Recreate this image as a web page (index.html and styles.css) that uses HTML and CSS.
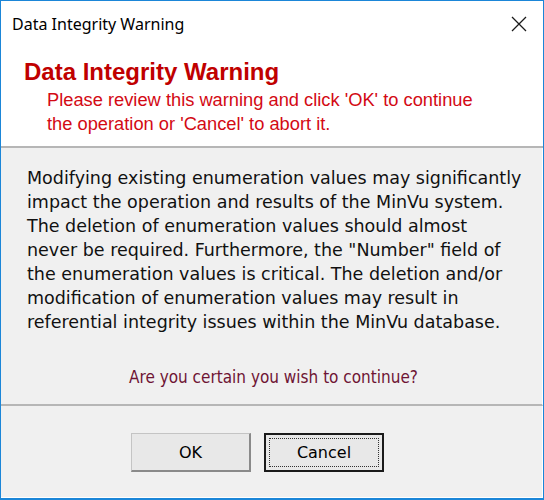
FILE: index.html
```html
<!DOCTYPE html>
<html lang="en">
<head>
  <meta charset="UTF-8">
  <title>Data Integrity Warning</title>
  <link rel="stylesheet" href="styles.css">
</head>
<body>

  <div class="window">
    <div class="titlebar">
      <span class="title">Data Integrity Warning</span>
      <svg class="close" width="16" height="16" viewBox="0 0 16 16">
        <path d="M1 1 L15 15 M15 1 L1 15" stroke="#1a1a1a" stroke-width="1.3" fill="none"/>
      </svg>
    </div>

    <div class="header">
      <div class="header-title">Data Integrity Warning</div>
      <div class="header-sub">Please review this warning and click 'OK' to continue<br>the operation or 'Cancel' to abort it.</div>
    </div>

    <div class="content">
      <p class="message">Modifying existing enumeration values may significantly<br>
        impact the operation and results of the MinVu system.<br>
        The deletion of enumeration values should almost<br>
        never be required. Furthermore, the "Number" field of<br>
        the enumeration values is critical. The deletion and/or<br>
        modification of enumeration values may result in<br>
        referential integrity issues within the MinVu database.</p>
      <p class="question">Are you certain you wish to continue?</p>
    </div>

    <div class="button-row">
      <button class="btn">OK</button>
      <button class="btn btn-default"><span class="focus">Cancel</span></button>
    </div>
  </div>

</body>
</html>
```

FILE: styles.css
```css
body {
  margin: 0;
  background-color: #ffffff;
}

.window {
  width: 544px;
  height: 500px;
  box-sizing: border-box;
  border: 1px solid #1b86d8;
  border-bottom-width: 2px;
  background-color: #f0f0f0;
  display: flex;
  flex-direction: column;
  overflow: hidden;
}

.titlebar {
  height: 44px;
  background-color: #ffffff;
  display: flex;
  align-items: center;
  justify-content: space-between;
  padding: 0 16px 0 11px;
}

.title {
  font-family: "Noto Sans", sans-serif;
  font-size: 16px;
  color: #000000;
  margin-top: 2px;
}

.close {
  margin-top: 2px;
}

.header {
  background-color: #ffffff;
  height: 103px;
  padding-top: 14px;
  box-sizing: border-box;
  border-bottom: 2px solid #b6b6b6;
  font-family: "Liberation Sans", Arial, sans-serif;
}

.header-title {
  font-size: 24px;
  font-weight: bold;
  color: #c00000;
  line-height: 26px;
  padding-left: 23px;
}

.header-sub {
  font-size: 18.3px;
  color: #d30a14;
  line-height: 24px;
  padding-left: 46px;
  margin-top: 3px;
}

.content {
  height: 258px;
  box-sizing: border-box;
  padding: 18px 0 0 26px;
  border-bottom: 2px solid #b6b6b6;
  border-right: 1px solid #ffffff;
  font-family: "DejaVu Sans", Verdana, sans-serif;
  line-height: 24px;
}

.message {
  margin: 0;
  font-size: 17.5px;
  color: #111111;
  white-space: nowrap;
}

.question {
  margin: 31px 0 0 0;
  font-family: "DejaVu Sans Condensed", "DejaVu Sans", sans-serif;
  font-size: 17px;
  color: #6e1434;
  text-align: center;
  padding-right: 22px;
}

.button-row {
  flex: 1;
  display: flex;
  gap: 13px;
  padding: 27px 0 0 130px;
  border-right: 1px solid #ffffff;
  border-bottom: 1px solid #ffffff;
}

.btn {
  width: 120px;
  height: 39px;
  background-color: #e8e8e8;
  border: 1px solid #c4c4c4;
  border-right: 2px solid #8a8a8a;
  border-bottom: 2px solid #8a8a8a;
  font-family: "DejaVu Sans", Verdana, sans-serif;
  font-size: 16px;
  color: #000000;
  padding: 0;
}

.btn-default {
  border: 2px solid #1a1a1a;
  padding: 3px;
}

.focus {
  display: flex;
  align-items: center;
  justify-content: center;
  height: 100%;
  box-sizing: border-box;
  border: 1px dotted #333333;
}
```
